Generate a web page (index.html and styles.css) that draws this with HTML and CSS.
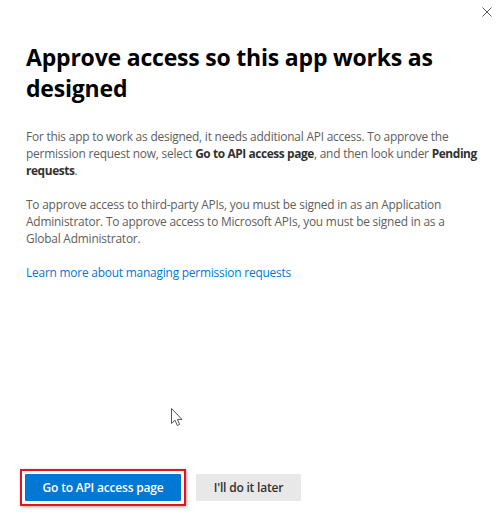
FILE: index.html
```html
<!DOCTYPE html>
<html lang="en">
<head>
<meta charset="utf-8">
<title>Approve access</title>
<link rel="stylesheet" href="styles.css">
</head>
<body>
<div class="dialog">
  <button class="close" aria-label="Close">
    <svg width="10" height="10" viewBox="0 0 10 10"><path d="M0.5 0.5 L9.5 9.5 M9.5 0.5 L0.5 9.5" stroke="#605e5c" stroke-width="1" fill="none"/></svg>
  </button>
  <div class="content">
    <h1 class="title">Approve access so this app works as designed</h1>
    <p class="text">For this app to work as designed, it needs additional API access. To approve the permission request now, select <b>Go to API access page</b>, and then look under <b>Pending requests</b>.</p>
    <p class="text">To approve access to third-party APIs, you must be signed in as an Application Administrator. To approve access to Microsoft APIs, you must be signed in as a Global Administrator.</p>
    <p class="text"><a class="link" href="#">Learn more about managing permission requests</a></p>
  </div>
  <div class="footer">
    <div class="highlight">
      <button class="btn primary">Go to API access page</button>
    </div>
    <button class="btn secondary">I'll do it later</button>
  </div>
  <svg class="cursor" width="13" height="19" viewBox="0 0 13 19">
    <path d="M0.5 0.5 L0.5 15.5 L4 12.2 L6.3 17.5 L8.6 16.5 L6.4 11.4 L11 11.4 Z" fill="#fff" stroke="#555" stroke-width="1" stroke-linejoin="round"/>
  </svg>
</div>
</body>
</html>
```

FILE: styles.css
```css
* { box-sizing: border-box; }
html, body { margin: 0; padding: 0; background: #fff; }
body {
  font-family: "Open Sans", "Noto Sans", "Liberation Sans", sans-serif;
}
.dialog {
  position: relative;
  height: 515px;
  display: flex;
  flex-direction: column;
}
.close {
  position: absolute;
  top: 7px;
  left: 482px;
  width: 10px;
  height: 10px;
  padding: 0;
  border: 0;
  background: transparent;
  display: block;
}
.close svg { display: block; }
.content {
  padding: 42px 19px 0 26px;
}
.title {
  margin: 0 0 24px 0;
  font-size: 23px;
  line-height: 31px;
  font-weight: 700;
  color: #000;
  letter-spacing: -0.2px;
}
.text {
  margin: 0 0 17px 0;
  font-size: 11.9px;
  line-height: 17px;
  color: #605e5c;
  letter-spacing: -0.2px;
}
.text b { color: #323130; font-weight: 700; letter-spacing: -0.4px; }
.link { color: #0078d4; text-decoration: none; }
.footer {
  margin-top: auto;
  padding: 0 0 9px 20px;
  display: flex;
  align-items: center;
  gap: 10px;
}
.highlight {
  border: 2px solid #e81123;
  padding: 3px;
  box-shadow: 1px 1px 3px rgba(0,0,0,0.35);
}
.btn {
  display: block;
  height: 27px;
  border: 0;
  border-radius: 1px;
  font-family: "Open Sans", "Noto Sans", sans-serif;
  font-size: 12px;
  font-weight: 600;
  letter-spacing: -0.2px;
  padding: 0;
}
.primary {
  width: 156px;
  background: #0078d4;
  color: #fff;
}
.secondary {
  width: 105px;
  background: #e8e8e8;
  color: #323130;
}
.cursor {
  position: absolute;
  left: 171px;
  top: 408px;
}
```
